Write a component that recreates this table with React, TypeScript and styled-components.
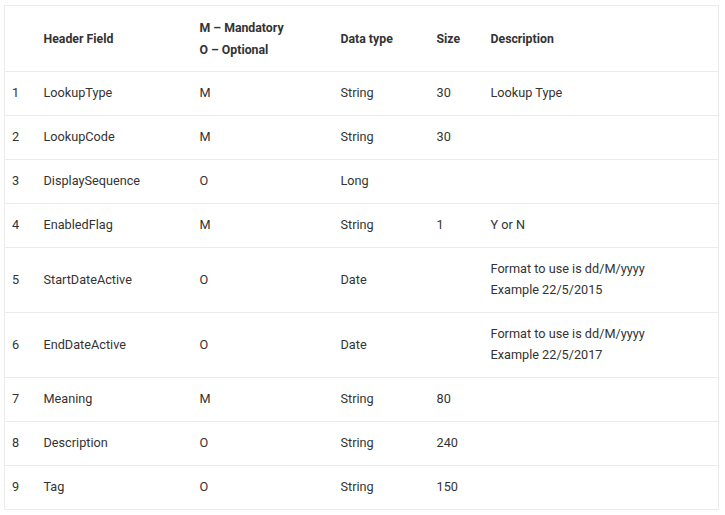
import React from 'react';
import styled, { createGlobalStyle } from 'styled-components';

const GlobalStyle = createGlobalStyle`
    html, body {
        margin: 0;
        padding: 0;
        background: #ffffff;
    }
    body {
        font-family: Roboto, 'Liberation Sans', Arial, sans-serif;
        color: #333333;
    }
`;

const Page = styled.div`
    padding: 5px 7px 0 4px;
`;

const Table = styled.table`
    width: 715px;
    border-collapse: collapse;
    table-layout: fixed;
    border: 1px solid #ebebeb;
    font-size: 12.7px;
`;

const Row = styled.tr`
    border-top: 1px solid #ebebeb;
`;

const HeadCell = styled.th<{ $w?: number }>`
    box-sizing: border-box;
    ${(p) => (p.$w ? `width: ${p.$w}px;` : '')}
    padding: 11px 7px 10px;
    text-align: left;
    vertical-align: middle;
    font-size: 12.3px;
    line-height: 22px;
    font-weight: 700;
    color: #333333;
`;

const Cell = styled.td`
    box-sizing: border-box;
    padding: 10px 7px 12px;
    text-align: left;
    vertical-align: middle;
    line-height: 21px;
    font-weight: 400;
    color: #333333;
`;

type Field = {
    name: string;
    req: string;
    type: string;
    size?: string;
    desc?: string[];
};

const fields: Field[] = [
    { name: 'LookupType', req: 'M', type: 'String', size: '30', desc: ['Lookup Type'] },
    { name: 'LookupCode', req: 'M', type: 'String', size: '30' },
    { name: 'DisplaySequence', req: 'O', type: 'Long' },
    { name: 'EnabledFlag', req: 'M', type: 'String', size: '1', desc: ['Y or N'] },
    {
        name: 'StartDateActive',
        req: 'O',
        type: 'Date',
        desc: ['Format to use is dd/M/yyyy', 'Example 22/5/2015'],
    },
    {
        name: 'EndDateActive',
        req: 'O',
        type: 'Date',
        desc: ['Format to use is dd/M/yyyy', 'Example 22/5/2017'],
    },
    { name: 'Meaning', req: 'M', type: 'String', size: '80' },
    { name: 'Description', req: 'O', type: 'String', size: '240' },
    { name: 'Tag', req: 'O', type: 'String', size: '150' },
];

function App() {
    return (
        <Page>
            <GlobalStyle />
            <Table>
                <thead>
                    <Row>
                        <HeadCell $w={32} />
                        <HeadCell $w={156}>Header Field</HeadCell>
                        <HeadCell $w={141}>
                            M – Mandatory
                            <br />O – Optional
                        </HeadCell>
                        <HeadCell $w={96}>Data type</HeadCell>
                        <HeadCell $w={54}>Size</HeadCell>
                        <HeadCell>Description</HeadCell>
                    </Row>
                </thead>
                <tbody>
                    {fields.map((f, index) => (
                        <Row key={f.name}>
                            <Cell>{index + 1}</Cell>
                            <Cell>{f.name}</Cell>
                            <Cell>{f.req}</Cell>
                            <Cell>{f.type}</Cell>
                            <Cell>{f.size}</Cell>
                            <Cell>
                                {f.desc?.map((line, i) => (
                                    <React.Fragment key={i}>
                                        {i > 0 && <br />}
                                        {line}
                                    </React.Fragment>
                                ))}
                            </Cell>
                        </Row>
                    ))}
                </tbody>
            </Table>
        </Page>
    );
}

export default App;
